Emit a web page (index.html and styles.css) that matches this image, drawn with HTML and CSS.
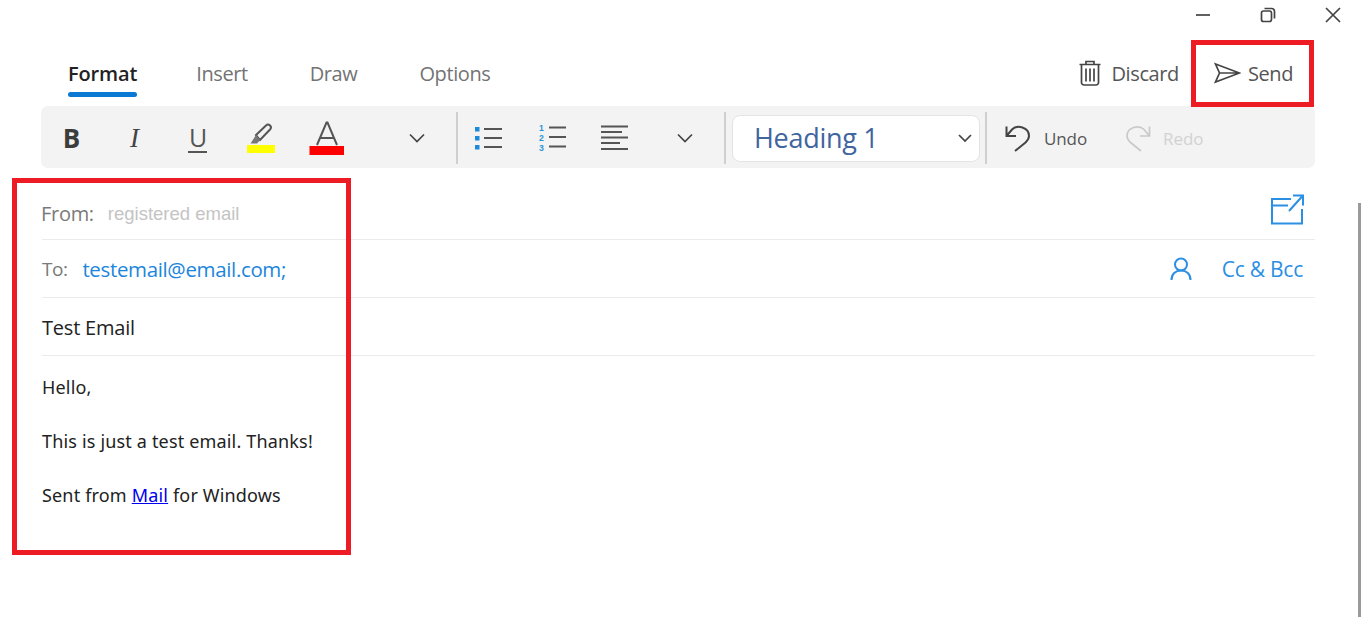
FILE: index.html
```html
<!DOCTYPE html>
<html lang="en">
<head>
<meta charset="utf-8">
<title>Mail compose</title>
<link rel="stylesheet" href="styles.css">
</head>
<body>
<div class="window">
  <header class="titlebar">
    <span class="winbtn"><svg width="16" height="16" viewBox="0 0 16 16"><path d="M1 8h14" class="ic-dark"/></svg></span>
    <span class="winbtn"><svg width="16" height="16" viewBox="0 0 16 16"><rect x="1.500" y="4" width="10" height="10.500" rx="2" class="ic-dark"/><path d="M4.500 1.500h7a3 3 0 0 1 3 3v7" class="ic-dark"/></svg></span>
    <span class="winbtn"><svg width="16" height="16" viewBox="0 0 16 16"><path d="M1 1l14 14M15 1L1 15" class="ic-dark"/></svg></span>
  </header>

  <nav class="tabbar">
    <div class="tabs">
      <span class="tab tab-active">Format</span>
      <span class="tab">Insert</span>
      <span class="tab">Draw</span>
      <span class="tab">Options</span>
    </div>
    <div class="actions">
      <span class="action action-discard">
        <svg width="24" height="28" viewBox="0 0 24 28"><path d="M1.500 5.500h21M8 5.500V2.500h8v3M3.500 5.500v18a2.500 2.500 0 0 0 2.500 2.500h12a2.500 2.500 0 0 0 2.500-2.500v-18M8 9.500v13M12 9.500v13M16 9.500v13" class="ic-dark"/></svg>
        Discard
      </span>
      <span class="action action-send">
        <svg width="27" height="22" viewBox="0 0 27 22"><path d="M1.500 2l24 9-24 9 4-9zM5.500 11h20" class="ic-dark"/></svg>
        Send
      </span>
    </div>
  </nav>

  <div class="toolbar">
    <span class="tool tool-text tool-bold">B</span>
    <span class="tool tool-text tool-italic">I</span>
    <span class="tool"><span class="underline-u">U</span></span>
    <span class="tool">
      <svg width="30" height="30" viewBox="0 0 30 30"><path d="M10 12L20 2.500a2.800 2.800 0 0 1 4 4L14 17z" class="ic-mid ic-thick"/><path d="M10 12l4 5-3 3.500H4.500z" class="ic-fill"/><rect x="1" y="22" width="28" height="8" fill="#ffff00"/></svg>
    </span>
    <span class="tool tool-color">
      <svg width="36" height="36" viewBox="0 0 36 36"><path d="M8 25L17.500 2.500h1L28 25M11.500 18h13" class="ic-mid ic-thick"/><rect x="0.500" y="26" width="34.500" height="9" fill="#ff0000"/></svg>
    </span>
    <span class="tool tool-chev-a"><svg width="18" height="12" viewBox="0 0 18 12"><path d="M2 2.500l7 7 7-7" class="ic-dark"/></svg></span>
    <span class="sep sep-a"></span>
    <span class="tool tool-list">
      <svg width="28" height="24" viewBox="0 0 28 24"><rect x="0" y="1" width="4.500" height="4.500" fill="#1b8ad8"/><rect x="0" y="10" width="4.500" height="4.500" fill="#1b8ad8"/><rect x="0" y="19" width="4.500" height="4.500" fill="#1b8ad8"/><path d="M9 3h18M9 12h18M9 21h18" class="ic-mid ic-thick"/></svg>
    </span>
    <span class="tool">
      <svg class="numlist" width="28" height="30" viewBox="0 0 28 30"><text class="num" x="1" y="8">1</text><text class="num" x="1" y="18">2</text><text class="num" x="1" y="28">3</text><path d="M11 4.500h17M11 14h17M11 23.500h17" class="ic-mid ic-thick"/></svg>
    </span>
    <span class="tool">
      <svg width="27" height="26" viewBox="0 0 27 26"><path d="M0 1.500h27M0 7h21M0 12.500h27M0 18h19M0 24h27" class="ic-mid ic-thick"/></svg>
    </span>
    <span class="tool tool-chev-b"><svg width="18" height="12" viewBox="0 0 18 12"><path d="M2 2.500l7 7 7-7" class="ic-dark"/></svg></span>
    <span class="sep sep-b"></span>
    <div class="style-select">
      <span class="style-name">Heading 1</span>
      <svg width="16" height="10" viewBox="0 0 16 10"><path d="M2 2l6 6 6-6" class="ic-dark"/></svg>
    </div>
    <span class="sep sep-c"></span>
    <span class="history">
      <svg width="26" height="28" viewBox="0 0 26 28"><path d="M1.500 2.500V12H11M1.500 12L7 5.500C12 .5 24 3 24 12c0 3-2 5-3.500 6.500L10 27" class="ic-dark ic-thick"/></svg>
      <span>Undo</span>
    </span>
    <span class="history history-off">
      <svg width="26" height="28" viewBox="0 0 26 28"><path d="M24.500 2.500V12H15M24.500 12L19 5.500C14 .5 2 3 2 12c0 3 2 5 3.500 6.500L16 27" class="ic-off ic-thick"/></svg>
      <span>Redo</span>
    </span>
  </div>

  <section class="fields">
    <div class="field field-from">
      <span class="label">From:</span>
      <span class="from-value">registered email</span>
      <svg class="popout" width="34" height="31" viewBox="0 0 34 31"><path d="M21 5H2v24.500h30V15M2 11.500h16M19 17L32.500 2M23 1.500h10v10" class="ic-blue"/></svg>
    </div>
    <div class="field">
      <span class="label label-to">To:</span>
      <span class="recipient">testemail@email.com;</span>
      <svg class="person" width="22" height="24" viewBox="0 0 22 24"><circle cx="11" cy="7.500" r="6" class="ic-blue"/><path d="M1.500 23c0-6 4-9.500 9.500-9.500s9.500 3.500 9.500 9.500" class="ic-blue"/></svg>
      <span class="ccbcc">Cc &amp; Bcc</span>
    </div>
    <div class="field subject">Test Email</div>
  </section>

  <article class="message">
    <p>Hello,</p>
    <p>This is just a test email. Thanks!</p>
    <p>Sent from <a href="#">Mail</a> for Windows</p>
  </article>
</div>
<div class="callout callout-send"></div>
<div class="callout callout-fields"></div>
<div class="scroll-thumb"></div>
</body>
</html>
```
FILE: styles.css
```css
* { box-sizing: border-box; }
html, body { margin: 0; height: 100%; background: #fff; overflow: hidden; }
body { font-family: "Open Sans", "Noto Sans", sans-serif; color: #222; position: relative; }
svg { display: block; fill: none; }

.ic-dark { stroke: #444; stroke-width: 1.7; fill: none; }
.ic-mid { stroke: #555; stroke-width: 1.6; fill: none; }
.ic-thick { stroke-width: 2; }
.ic-fill { fill: #777; }
.ic-off { stroke: #c9c9c9; stroke-width: 1.7; fill: none; }
.ic-blue { stroke: #2b8fe3; stroke-width: 2; fill: none; }
.numlist { overflow: visible; }
.num { font-family: "Liberation Sans", sans-serif; font-size: 8.700px; font-weight: 700; fill: #2b95dc; }

.window { width: 1366px; }

.titlebar { height: 30px; display: flex; justify-content: flex-end; padding-right: 1px; }
.winbtn { width: 65px; display: flex; align-items: center; justify-content: center; }

.tabbar { height: 76px; display: flex; justify-content: space-between; padding: 0 73px 0 68px; }
.tabs { display: flex; gap: 62px; }
.tab { font-size: 20px; letter-spacing: -0.4px; color: #737373; line-height: 27px; padding-top: 30px; height: 67px; position: relative; }
.tab-active { font-weight: 600; color: #222; letter-spacing: -0.15px; margin-right: -3px; }
.tab-active::after { content: ""; position: absolute; left: 0; right: 0; bottom: 0; height: 5px; border-radius: 3px; background: #0b78d4; }
.actions { display: flex; align-items: flex-start; }
.action { display: flex; align-items: center; font-size: 20px; letter-spacing: -0.4px; line-height: 27px; color: #555; height: 30px; margin-top: 28px; }
.action-discard { gap: 9px; }
.action-send { gap: 7px; margin-left: 35px; }

.toolbar { margin: 0 51px 0 41px; height: 62px; padding-top: 2px; background: #f3f3f3; border-radius: 7px; display: flex; align-items: center; }
.tool { width: 63px; height: 40px; flex: none; display: flex; align-items: center; justify-content: center; color: #444; }
.tool-text { font-size: 26px; line-height: 40px; }
.tool-bold { font-weight: 700; color: #3c3c3c; margin-left: -1px; }
.tool-italic { font-family: "Liberation Serif", serif; font-style: italic; font-size: 27px; }
.underline-u { font-size: 25px; line-height: 28px; border-bottom: 2px solid #555; padding: 0 1px; color: #555; letter-spacing: -1px; }
.tool-color { margin-left: 3px; }
.tool-chev-a { margin-left: 27px; }
.sep { width: 2px; height: 52px; background: #cfcfcf; flex: none; }
.sep-a { margin-left: 8px; }
.tool-list { margin-left: -1px; }
.tool-chev-b { margin-left: 7px; }
.sep-b { margin-left: 8px; }
.style-select { margin-left: 6px; width: 248px; height: 47px; flex: none; background: #fff; border: 1px solid #e4e4e4; border-radius: 8px; display: flex; align-items: center; justify-content: space-between; padding: 0 6px 0 21px; }
.style-name { font-size: 27px; letter-spacing: -0.3px; color: #41659f; line-height: 34px; }
.sep-c { margin-left: 5px; }
.history { display: flex; align-items: center; gap: 13px; font-size: 17px; letter-spacing: -0.1px; color: #555; flex: none; margin-left: 18px; }
.history-off { margin-left: 38px; gap: 12px; color: #d2d2d2; }

.fields { margin: 14px 51px 0 42px; }
.field { height: 58px; border-bottom: 1.5px solid #ebebeb; display: flex; align-items: center; }
.field-from { padding-top: 6px; }
.label { font-size: 20px; letter-spacing: -0.3px; color: #7a7a7a; margin: 0 14px 0 -1px; }
.label-to { font-size: 19px; letter-spacing: -0.5px; margin: 0 15px 0 0; }
.from-value { font-family: "Liberation Sans", sans-serif; font-size: 18.500px; color: #c4c4c4; }
.popout { margin: -8px 11px 0 auto; }
.recipient { font-size: 20.500px; letter-spacing: -0.35px; color: #1c86dc; }
.person { margin-left: auto; margin-right: 30px; }
.ccbcc { font-size: 21px; letter-spacing: -0.25px; color: #2b8fe3; margin-right: 12px; }
.subject { font-size: 20px; letter-spacing: -0.2px; color: #222; padding-top: 2px; }

.message { margin: 18px 0 0 42px; font-family: "Noto Sans", "Open Sans", sans-serif; font-size: 18px; letter-spacing: 0.17px; line-height: 27px; color: #222; }
.message p { margin: 0 0 27px; }
.message a { color: #0000ee; }

.callout { position: absolute; border: 5px solid #ed1c24; }
.callout-send { left: 1191px; top: 40px; width: 123px; height: 67px; }
.callout-fields { left: 12px; top: 178px; width: 339px; height: 377px; }
.scroll-thumb { position: absolute; left: 1358px; top: 203px; width: 3px; bottom: 0; background: #9a9a9a; }
```
